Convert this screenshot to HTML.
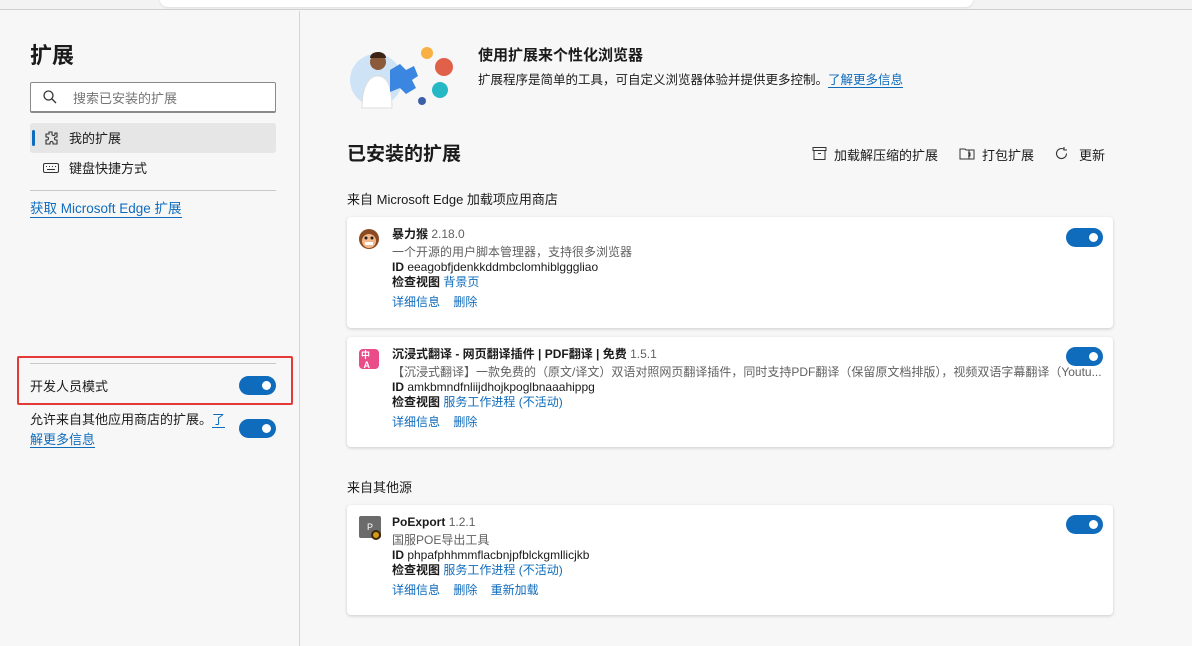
<!DOCTYPE html>
<html><head><meta charset="utf-8"><style>
*{box-sizing:border-box;margin:0;padding:0}
body{width:1192px;height:646px;overflow:hidden;background:#f7f7f7;font-family:"Liberation Sans","Noto Sans CJK SC",sans-serif;color:#1b1b1b;position:relative;font-size:13px}
.a{position:absolute}
.top{left:0;top:0;width:1192px;height:10px;background:#f3f3f3;border-bottom:1px solid #cfcfcf}
.addr{left:160px;top:-8px;width:813px;height:15px;background:#fff;border-radius:8px;box-shadow:0 1px 2px #ddd}
.side{left:0;top:11px;width:300px;height:635px;border-right:1px solid #d6d6d6}
.link{color:#0f6cbd}
.u{border-bottom:1px solid #0f6cbd}
.tog{width:37px;height:19px;border-radius:10px;background:#0f6cbd}
.tog::after{content:"";position:absolute;right:5px;top:5px;width:9px;height:9px;border-radius:50%;background:#fff}
.card{left:347px;width:766px;background:#fff;border-radius:4px;box-shadow:0 1px 3px rgba(0,0,0,.18)}
.card .t{position:absolute;left:45px;font-size:12px;line-height:15px;white-space:nowrap}
.g{color:#616161}
b{font-weight:bold}
</style></head><body>
<div class="a top"></div><div class="a addr"></div>
<div class="a side"></div>
<div class="a" style="left:30px;top:38px;font-size:22px;font-weight:bold">扩展</div>
<div class="a" style="left:30px;top:82px;width:246px;height:31px;border:1px solid #8a8a8a;border-bottom:2px solid #8a8a8a;background:#fff;border-radius:2px"></div>
<svg class="a" style="left:42px;top:89px" width="16" height="16" viewBox="0 0 16 16"><circle cx="6.5" cy="6.5" r="4.5" fill="none" stroke="#333" stroke-width="1.3"/><path d="M10 10l4 4" stroke="#333" stroke-width="1.3"/></svg>
<div class="a" style="left:73px;top:88px;font-size:13px;color:#767676">搜索已安装的扩展</div>
<div class="a" style="left:30px;top:123px;width:246px;height:30px;background:#e6e6e6;border-radius:3px"></div>
<div class="a" style="left:32px;top:130px;width:3px;height:16px;background:#0f6cbd;border-radius:2px"></div>
<svg class="a" style="left:43px;top:130px" width="16" height="16" viewBox="0 0 16 16"><path d="M6 2h3v2a1.5 1.5 0 003 0v-1h2v4h-1a1.5 1.5 0 000 3h1v4H10v-1a1.5 1.5 0 00-3 0v1H3v-4h1a1.5 1.5 0 000-3H3V4h3z" fill="none" stroke="#333" stroke-width="1.1"/></svg>
<div class="a" style="left:69px;top:128px">我的扩展</div>
<svg class="a" style="left:43px;top:162px" width="16" height="12" viewBox="0 0 16 12"><rect x="0.5" y="1.5" width="15" height="9" rx="1.5" fill="none" stroke="#333"/><path d="M3 4.5h1M6 4.5h1M9 4.5h1M12 4.5h1M4 7.5h8" stroke="#333"/></svg>
<div class="a" style="left:69px;top:158px">键盘快捷方式</div>
<div class="a" style="left:30px;top:190px;width:246px;height:1px;background:#c8c8c8"></div>
<div class="a link u" style="left:30px;top:200px;font-size:13.5px;line-height:17px">获取 Microsoft Edge 扩展</div>
<div class="a" style="left:17px;top:356px;width:276px;height:49px;border:2px solid #e53935;border-radius:2px"></div>
<div class="a" style="left:30px;top:363px;width:246px;height:1px;background:#c8c8c8"></div>
<div class="a" style="left:30px;top:376px">开发人员模式</div>
<div class="a tog" style="left:239px;top:376px"></div>
<div class="a" style="left:30px;top:410px;line-height:20px;width:200px">允许来自其他应用商店的扩展。<span class="link u">了</span><br><span class="link u">解更多信息</span></div>
<div class="a tog" style="left:239px;top:419px"></div>

<svg class="a" style="left:348px;top:40px" width="110" height="70" viewBox="0 0 110 70"><circle cx="28" cy="40" r="26" fill="#cfe3f7"/><path d="M14 68c0-20 6-32 16-32s14 12 14 32z" fill="#fff" stroke="#ddd"/><circle cx="30" cy="22" r="8" fill="#8a5a3b"/><path d="M22 18c0-8 16-8 16 0z" fill="#3b2416"/><path d="M42 30l10-6 6 6 8-4 4 10-6 4 4 8-10 6-6-6-10 4z" fill="#3a86e0"/><circle cx="79" cy="13" r="6" fill="#f6b142"/><circle cx="96" cy="27" r="9" fill="#e0604a"/><circle cx="92" cy="50" r="8" fill="#27b8c6"/><circle cx="74" cy="61" r="4" fill="#3b5fa8"/></svg>
<div class="a" style="left:478px;top:44px;font-size:15px;font-weight:bold">使用扩展来个性化浏览器</div>
<div class="a" style="left:478px;top:69px;font-size:12.5px">扩展程序是简单的工具，可自定义浏览器体验并提供更多控制。<span class="link u">了解更多信息</span></div>
<div class="a" style="left:347px;top:139px;font-size:19px;font-weight:bold">已安装的扩展</div>
<svg class="a" style="left:812px;top:146px" width="15" height="15" viewBox="0 0 15 15"><rect x="1" y="1.5" width="13" height="3" fill="none" stroke="#333"/><path d="M2 4.5v9h11v-9M6 7.5h3" fill="none" stroke="#333"/></svg>
<div class="a" style="left:834px;top:145px">加载解压缩的扩展</div>
<svg class="a" style="left:959px;top:146px" width="16" height="15" viewBox="0 0 16 15"><path d="M1 3h5l1 1h8v9H1zM10 4v9M9 7h2v3H9" fill="none" stroke="#333"/></svg>
<div class="a" style="left:982px;top:145px">打包扩展</div>
<svg class="a" style="left:1054px;top:146px" width="15" height="15" viewBox="0 0 15 15"><path d="M12.5 7.5A5 5 0 1 1 10 3.2M10 1v3h3" fill="none" stroke="#333" stroke-width="1.1"/></svg>
<div class="a" style="left:1079px;top:145px">更新</div>
<div class="a" style="left:347px;top:189px">来自 Microsoft Edge 加载项应用商店</div>

<div class="a card" style="top:217px;height:111px">
<svg class="a" style="left:11px;top:11px" width="22" height="22" viewBox="0 0 22 22"><circle cx="11" cy="11" r="10" fill="#8b4a22"/><circle cx="11" cy="13" r="7" fill="#f3b88a"/><circle cx="8" cy="10" r="1.5" fill="#222"/><circle cx="14" cy="10" r="1.5" fill="#222"/><rect x="7" y="14" width="8" height="3" fill="#fff"/></svg>
<div class="t" style="top:10px"><b>暴力猴</b> <span class="g">2.18.0</span></div>
<div class="t g" style="top:28px">一个开源的用户脚本管理器，支持很多浏览器</div>
<div class="t" style="top:43px"><b>ID</b> eeagobfjdenkkddmbclomhiblgggliao</div>
<div class="t" style="top:58px"><b>检查视图</b> <span class="link">背景页</span></div>
<div class="t link" style="top:78px">详细信息 &nbsp;&nbsp;&nbsp;删除</div>
<div class="a tog" style="left:719px;top:11px"></div>
</div>

<div class="a card" style="top:337px;height:110px">
<div class="a" style="left:12px;top:12px;width:20px;height:20px;background:#ea4c89;border-radius:4px;color:#fff;font-size:9px;font-weight:bold;line-height:10px;padding:1px 2px">中<br>&nbsp;A</div>
<div class="t" style="top:10px"><b>沉浸式翻译 - 网页翻译插件 | PDF翻译 | 免费</b> <span class="g">1.5.1</span></div>
<div class="t g" style="top:28px">【沉浸式翻译】一款免费的（原文/译文）双语对照网页翻译插件，同时支持PDF翻译（保留原文档排版），视频双语字幕翻译（Youtu...</div>
<div class="t" style="top:43px"><b>ID</b> amkbmndfnliijdhojkpoglbnaaahippg</div>
<div class="t" style="top:58px"><b>检查视图</b> <span class="link">服务工作进程 (不活动)</span></div>
<div class="t link" style="top:78px">详细信息 &nbsp;&nbsp;&nbsp;删除</div>
<div class="a tog" style="left:719px;top:10px"></div>
</div>

<div class="a" style="left:347px;top:477px">来自其他源</div>
<div class="a card" style="top:505px;height:110px">
<div class="a" style="left:12px;top:11px;width:22px;height:22px;background:#6b6b6b;border-radius:2px;color:#fff;font-size:9px;text-align:center;line-height:22px">P</div>
<div class="a" style="left:24px;top:25px;width:10px;height:10px;background:#d89a1a;border:2px solid #3a2a0a;border-radius:50%"></div>
<div class="t" style="top:10px"><b>PoExport</b> <span class="g">1.2.1</span></div>
<div class="t g" style="top:28px">国服POE导出工具</div>
<div class="t" style="top:43px"><b>ID</b> phpafphhmmflacbnjpfblckgmllicjkb</div>
<div class="t" style="top:58px"><b>检查视图</b> <span class="link">服务工作进程 (不活动)</span></div>
<div class="t link" style="top:78px">详细信息 &nbsp;&nbsp;&nbsp;删除 &nbsp;&nbsp;&nbsp;重新加载</div>
<div class="a tog" style="left:719px;top:10px"></div>
</div>
</body></html>
